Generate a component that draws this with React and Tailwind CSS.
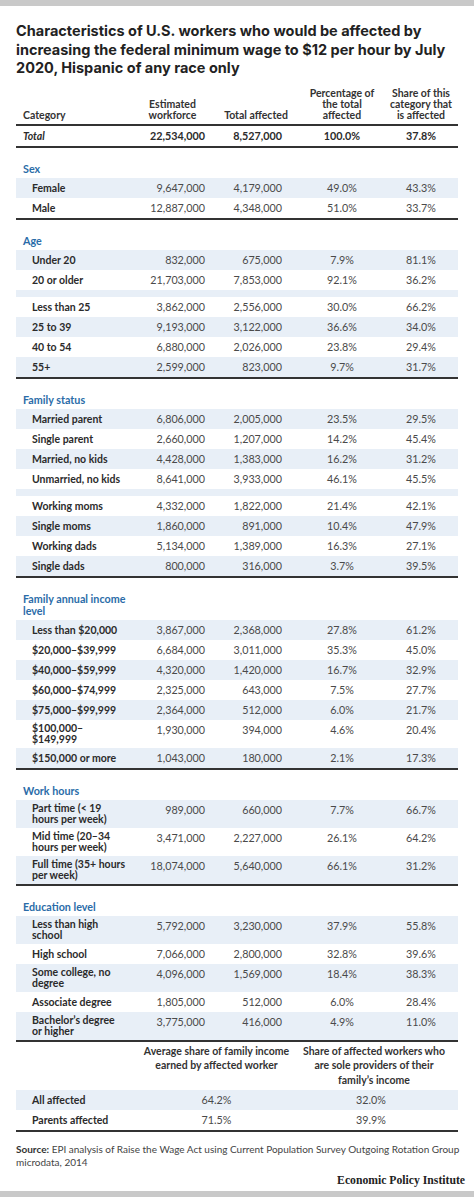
import React from "react";

const sections = [
  {
    label: ["Sex"],
    rows: [
      ["Female", "9,647,000", "4,179,000", "49.0%", "43.3%"],
      ["Male", "12,887,000", "4,348,000", "51.0%", "33.7%"],
    ],
  },
  {
    label: ["Age"],
    rows: [
      ["Under 20", "832,000", "675,000", "7.9%", "81.1%"],
      ["20 or older", "21,703,000", "7,853,000", "92.1%", "36.2%"],
      null,
      ["Less than 25", "3,862,000", "2,556,000", "30.0%", "66.2%"],
      ["25 to 39", "9,193,000", "3,122,000", "36.6%", "34.0%"],
      ["40 to 54", "6,880,000", "2,026,000", "23.8%", "29.4%"],
      ["55+", "2,599,000", "823,000", "9.7%", "31.7%"],
    ],
  },
  {
    label: ["Family status"],
    rows: [
      ["Married parent", "6,806,000", "2,005,000", "23.5%", "29.5%"],
      ["Single parent", "2,660,000", "1,207,000", "14.2%", "45.4%"],
      ["Married, no kids", "4,428,000", "1,383,000", "16.2%", "31.2%"],
      ["Unmarried, no kids", "8,641,000", "3,933,000", "46.1%", "45.5%"],
      null,
      ["Working moms", "4,332,000", "1,822,000", "21.4%", "42.1%"],
      ["Single moms", "1,860,000", "891,000", "10.4%", "47.9%"],
      ["Working dads", "5,134,000", "1,389,000", "16.3%", "27.1%"],
      ["Single dads", "800,000", "316,000", "3.7%", "39.5%"],
    ],
  },
  {
    label: ["Family annual income", "level"],
    rows: [
      ["Less than $20,000", "3,867,000", "2,368,000", "27.8%", "61.2%"],
      ["$20,000\u2013$39,999", "6,684,000", "3,011,000", "35.3%", "45.0%"],
      ["$40,000\u2013$59,999", "4,320,000", "1,420,000", "16.7%", "32.9%"],
      ["$60,000\u2013$74,999", "2,325,000", "643,000", "7.5%", "27.7%"],
      ["$75,000\u2013$99,999", "2,364,000", "512,000", "6.0%", "21.7%"],
      [["$100,000\u2013", "$149,999"], "1,930,000", "394,000", "4.6%", "20.4%"],
      ["$150,000 or more", "1,043,000", "180,000", "2.1%", "17.3%"],
    ],
  },
  {
    label: ["Work hours"],
    rows: [
      [["Part time (< 19", "hours per week)"], "989,000", "660,000", "7.7%", "66.7%"],
      [["Mid time (20\u201334", "hours per week)"], "3,471,000", "2,227,000", "26.1%", "64.2%"],
      [["Full time (35+ hours", "per week)"], "18,074,000", "5,640,000", "66.1%", "31.2%"],
    ],
  },
  {
    label: ["Education level"],
    rows: [
      [["Less than high", "school"], "5,792,000", "3,230,000", "37.9%", "55.8%"],
      ["High school", "7,066,000", "2,800,000", "32.8%", "39.6%"],
      [["Some college, no", "degree"], "4,096,000", "1,569,000", "18.4%", "38.3%"],
      ["Associate degree", "1,805,000", "512,000", "6.0%", "28.4%"],
      [["Bachelor\u2019s degree", "or higher"], "3,775,000", "416,000", "4.9%", "11.0%"],
    ],
  },
];

const GRID = "grid grid-cols-[129px_67px_88px_84px_74px]";

function Row({ row, blue }) {
  if (!row) {
    return <div className={blue ? "h-[7px] bg-[#e8eff7]" : "h-[7px]"} />;
  }
  const [label, a, b, c, d] = row;
  const two = Array.isArray(label);
  const vcell = two ? "pt-[4px] leading-[11px]" : "leading-[20px]";
  return (
    <div className={`${GRID} ${two ? "h-[28px]" : "h-[20px]"} ${blue ? "bg-[#e8eff7]" : ""}`}>
      <div className={`pl-[16px] font-bold text-[10.5px] text-[#2b2b2b] whitespace-nowrap ${two ? "pt-[3px] leading-[11px]" : "leading-[20px]"}`}>
        {two ? (
          <>
            {label[0]}
            <br />
            {label[1]}
          </>
        ) : (
          label
        )}
      </div>
      <div className={`text-right pr-[7px] text-[10.75px] text-[#4a4a4a] ${vcell}`}>{a}</div>
      <div className={`text-right pr-[18px] text-[10.75px] text-[#4a4a4a] ${vcell}`}>{b}</div>
      <div className={`text-center text-[10.75px] text-[#4a4a4a] ${vcell}`}>{c}</div>
      <div className={`text-center text-[10.75px] text-[#4a4a4a] ${vcell}`}>{d}</div>
    </div>
  );
}

function SectionLabel({ label }) {
  return (
    <div className={`${label.length > 1 ? "h-[42px]" : "h-[30px]"} flex items-end pb-[3px] pl-[7px]`}>
      <div className="text-[10.75px] leading-[12px] font-bold text-[#2a6ca8] whitespace-nowrap">
        {label.length > 1 ? (
          <>
            {label[0]}
            <br />
            {label[1]}
          </>
        ) : (
          label[0]
        )}
      </div>
    </div>
  );
}

const Rule = () => <div className="h-[2px] bg-[#333333]" />;

export default function App() {
  return (
    <div
      className="w-[474px] h-[1197px] bg-white flex flex-col text-[#2b2b2b]"
      style={{ fontFamily: "Lato, 'Open Sans', Arial, sans-serif" }}
    >
      <div className="h-[6px] bg-[#c9c9c9] shrink-0" />
      <div className="px-[16px] pt-[16px]">
        <h1
          className="text-[14.5px] leading-[18.5px] font-bold text-[#222] whitespace-nowrap"
          style={{ fontFamily: "Inter, Lato, Arial, sans-serif" }}
        >
          Characteristics of U.S. workers who would be affected by
          <br />
          increasing the federal minimum wage to $12 per hour by July
          <br />
          2020, Hispanic of any race only
        </h1>

        {/* header */}
        <div className={`${GRID} items-end pt-[10px] pb-[3px] text-[10.5px] leading-[11px] font-bold text-[#333]`}>
          <div className="pl-[7px]">Category</div>
          <div className="text-center pr-[12px]">
            Estimated
            <br />
            workforce
          </div>
          <div className="text-center whitespace-nowrap">Total affected</div>
          <div className="text-center">
            Percentage of
            <br />
            the total
            <br />
            affected
          </div>
          <div className="text-center whitespace-nowrap">
            Share of this
            <br />
            category that
            <br />
            is affected
          </div>
        </div>
        <Rule />
        <div className={`${GRID} h-[20px] leading-[20px] font-bold text-[10.75px] text-[#2b2b2b]`}>
          <div className="pl-[7px] italic text-[10.5px]">Total</div>
          <div className="text-right pr-[7px]">22,534,000</div>
          <div className="text-right pr-[18px]">8,527,000</div>
          <div className="text-center">100.0%</div>
          <div className="text-center">37.8%</div>
        </div>
        <Rule />

        {sections.map((s, si) => (
          <div key={si}>
            <SectionLabel label={s.label} />
            {s.rows.map((r, ri) => (
              <Row key={ri} row={r} blue={ri % 2 === 0} />
            ))}
            <Rule />
          </div>
        ))}

        {/* bottom sub-table */}
        <div className="grid grid-cols-[127px_147px_168px] items-start pt-[2px] pb-[3px] text-[10.5px] leading-[14.5px] font-bold text-[#333]">
          <div />
          <div className="text-center whitespace-nowrap">
            Average share of family income
            <br />
            earned by affected worker
          </div>
          <div className="text-center whitespace-nowrap">
            Share of affected workers who
            <br />
            are sole providers of their
            <br />
            family&rsquo;s income
          </div>
        </div>
        <div className="grid grid-cols-[127px_147px_168px] h-[20px] leading-[20px] bg-[#e8eff7]">
          <div className="pl-[16px] font-bold text-[10.5px] text-[#2b2b2b]">All affected</div>
          <div className="text-center text-[10.75px] text-[#4a4a4a]">64.2%</div>
          <div className="text-center text-[10.75px] text-[#4a4a4a] pr-[6px]">32.0%</div>
        </div>
        <div className="grid grid-cols-[127px_147px_168px] h-[20px] leading-[20px]">
          <div className="pl-[16px] font-bold text-[10.5px] text-[#2b2b2b]">Parents affected</div>
          <div className="text-center text-[10.75px] text-[#4a4a4a]">71.5%</div>
          <div className="text-center text-[10.75px] text-[#4a4a4a] pr-[6px]">39.9%</div>
        </div>
        <Rule />

        <p className="mt-[11px] text-[10px] leading-[13px] text-[#444] whitespace-nowrap">
          <span className="font-bold text-[#333]">Source:</span> EPI analysis of Raise the Wage Act using Current Population Survey Outgoing Rotation Group
          <br />
          microdata, 2014
        </p>
      </div>
      <div className="flex justify-end pr-[9px] mt-[5px]">
        <div
          className="text-[11.7px] leading-[14px] font-bold text-[#222]"
          style={{ fontFamily: "'Liberation Serif', 'Times New Roman', serif" }}
        >
          Economic Policy Institute
        </div>
      </div>
      <div className="flex-1" />
      <div className="h-[6px] bg-[#c9c9c9] shrink-0" />
    </div>
  );
}
